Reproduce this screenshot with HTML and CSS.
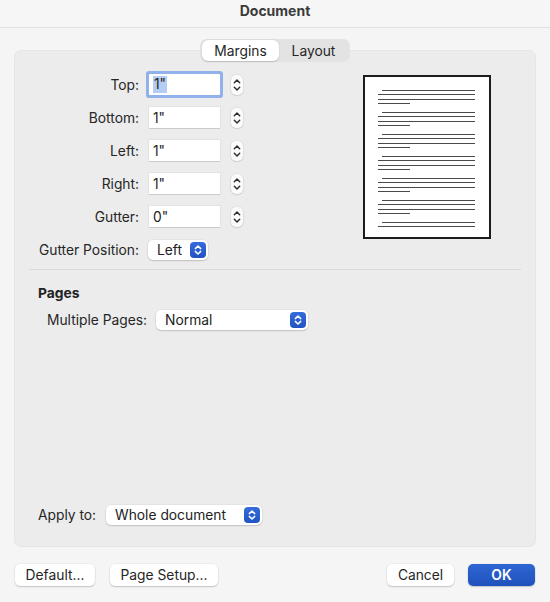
FILE: index.html
```html
<!DOCTYPE html>
<html>
<head>
<meta charset="utf-8">
<title>Document</title>
<link rel="stylesheet" href="styles.css">
</head>
<body>
<header class="titlebar">Document</header>
<main class="content">
  <div class="tabs">
    <span class="tab active">Margins</span>
    <span class="tab">Layout</span>
  </div>
  <section class="box">
    <div class="upper">
      <div class="form">
        <div class="row">
          <span class="lbl">Top:</span>
          <span class="field focused"><span class="sel">1"</span></span>
          <span class="stepper"><svg width="12" height="20" viewBox="0 0 12 20"><path d="M3.3 7.8 L6 5 L8.7 7.8 M3.3 12.2 L6 15 L8.7 12.2" fill="none" stroke="#2a2a2a" stroke-width="1.4" stroke-linecap="round" stroke-linejoin="round"/></svg></span>
        </div>
        <div class="row">
          <span class="lbl">Bottom:</span>
          <span class="field">1"</span>
          <span class="stepper"><svg width="12" height="20" viewBox="0 0 12 20"><path d="M3.3 7.8 L6 5 L8.7 7.8 M3.3 12.2 L6 15 L8.7 12.2" fill="none" stroke="#2a2a2a" stroke-width="1.4" stroke-linecap="round" stroke-linejoin="round"/></svg></span>
        </div>
        <div class="row">
          <span class="lbl">Left:</span>
          <span class="field">1"</span>
          <span class="stepper"><svg width="12" height="20" viewBox="0 0 12 20"><path d="M3.3 7.8 L6 5 L8.7 7.8 M3.3 12.2 L6 15 L8.7 12.2" fill="none" stroke="#2a2a2a" stroke-width="1.4" stroke-linecap="round" stroke-linejoin="round"/></svg></span>
        </div>
        <div class="row">
          <span class="lbl">Right:</span>
          <span class="field">1"</span>
          <span class="stepper"><svg width="12" height="20" viewBox="0 0 12 20"><path d="M3.3 7.8 L6 5 L8.7 7.8 M3.3 12.2 L6 15 L8.7 12.2" fill="none" stroke="#2a2a2a" stroke-width="1.4" stroke-linecap="round" stroke-linejoin="round"/></svg></span>
        </div>
        <div class="row">
          <span class="lbl">Gutter:</span>
          <span class="field">0"</span>
          <span class="stepper"><svg width="12" height="20" viewBox="0 0 12 20"><path d="M3.3 7.8 L6 5 L8.7 7.8 M3.3 12.2 L6 15 L8.7 12.2" fill="none" stroke="#2a2a2a" stroke-width="1.4" stroke-linecap="round" stroke-linejoin="round"/></svg></span>
        </div>
        <div class="row">
          <span class="lbl">Gutter Position:</span>
          <span class="popup popup-gutter"><span class="ptext">Left</span><span class="pbtn"><svg width="16" height="16" viewBox="0 0 16 16"><path d="M5.3 6.6 L8 4 L10.7 6.6 M5.3 9.4 L8 12 L10.7 9.4" fill="none" stroke="#fff" stroke-width="1.5" stroke-linecap="round" stroke-linejoin="round"/></svg></span></span>
        </div>
      </div>
      <div class="preview">
        <div class="grp"><i class="ln ind"></i><i class="ln"></i><i class="ln"></i><i class="ln short"></i></div>
        <div class="grp"><i class="ln ind"></i><i class="ln"></i><i class="ln"></i><i class="ln short"></i></div>
        <div class="grp"><i class="ln ind"></i><i class="ln"></i><i class="ln"></i><i class="ln short"></i></div>
        <div class="grp"><i class="ln ind"></i><i class="ln"></i><i class="ln"></i><i class="ln short"></i></div>
        <div class="grp"><i class="ln ind"></i><i class="ln"></i><i class="ln"></i><i class="ln short"></i></div>
        <div class="grp"><i class="ln ind"></i><i class="ln"></i><i class="ln"></i><i class="ln short"></i></div>
        <div class="grp"><i class="ln ind"></i><i class="ln"></i></div>
      </div>
    </div>
    <hr class="sep">
    <div class="pages">
      <div class="pages-title">Pages</div>
      <div class="mp-row">
        <span class="mp-lbl">Multiple Pages:</span>
        <span class="popup popup-mp"><span class="ptext">Normal</span><span class="pbtn"><svg width="16" height="16" viewBox="0 0 16 16"><path d="M5.3 6.6 L8 4 L10.7 6.6 M5.3 9.4 L8 12 L10.7 9.4" fill="none" stroke="#fff" stroke-width="1.5" stroke-linecap="round" stroke-linejoin="round"/></svg></span></span>
      </div>
    </div>
    <div class="apply-row">
      <span class="apply-lbl">Apply to:</span>
      <span class="popup popup-apply"><span class="ptext">Whole document</span><span class="pbtn"><svg width="16" height="16" viewBox="0 0 16 16"><path d="M5.3 6.6 L8 4 L10.7 6.6 M5.3 9.4 L8 12 L10.7 9.4" fill="none" stroke="#fff" stroke-width="1.5" stroke-linecap="round" stroke-linejoin="round"/></svg></span></span>
    </div>
  </section>
  <footer class="buttons">
    <div class="btn-group">
      <button class="btn btn-default">Default...</button>
      <button class="btn btn-setup">Page Setup...</button>
    </div>
    <div class="btn-group right">
      <button class="btn btn-cancel">Cancel</button>
      <button class="btn btn-ok">OK</button>
    </div>
  </footer>
</main>
</body>
</html>
```

FILE: styles.css
```css
* { box-sizing: border-box; }

body {
  margin: 0;
  width: 550px;
  height: 602px;
  overflow: hidden;
  background: #f5f5f5;
  font-family: Inter, "Noto Sans", "Liberation Sans", sans-serif;
  font-size: 13.8px;
  color: #262626;
}

.titlebar {
  height: 28px;
  line-height: 22px;
  text-align: center;
  font-weight: 700;
  font-size: 14px;
  color: #3a3a3a;
  border-bottom: 1px solid #e2e2e2;
  background: #f6f6f6;
}

.content {
  display: flex;
  flex-direction: column;
}

.tabs {
  position: relative;
  z-index: 1;
  align-self: center;
  margin-top: 11px;
  height: 23px;
  width: 150px;
  display: flex;
  padding: 1px 2px;
  background: #e3e3e3;
  border-radius: 7px;
}

.tab {
  flex: 0 0 auto;
  display: flex;
  align-items: center;
  justify-content: center;
  border-radius: 6px;
  color: #262626;
}

.tab.active {
  width: 77px;
  background: #fff;
  box-shadow: 0 0.5px 1.5px rgba(0,0,0,0.18);
}

.tab:not(.active) {
  width: 69px;
}

.box {
  margin: -12px 0 0 14px;
  width: 522px;
  height: 497px;
  background: #ececec;
  border-radius: 7px;
  border: 1px solid #e6e6e6;
  padding-top: 23px;
  display: flex;
  flex-direction: column;
}

.upper {
  display: flex;
  justify-content: space-between;
  align-items: flex-start;
  padding-right: 44px;
}

.form {
  display: flex;
  flex-direction: column;
  gap: 12px;
}

.row {
  display: flex;
  align-items: center;
  height: 21px;
}

.lbl {
  width: 124px;
  text-align: right;
  margin-right: 10px;
}

.field {
  width: 71px;
  height: 21px;
  background: #fff;
  display: flex;
  align-items: center;
  padding-left: 4px;
  box-shadow: 0 0 0 0.5px rgba(0,0,0,0.08), 0 1px 0.5px rgba(0,0,0,0.10);
  color: #222;
}

.field.focused {
  box-shadow: 0 0 0 3px #90b1ea;
  border-radius: 1px;
}

.sel {
  background: #b6cdf3;
  padding: 1px 1px;
  line-height: 15px;
}

.stepper {
  margin-left: 11px;
  width: 12px;
  height: 20px;
  background: #fbfbfb;
  border-radius: 5px;
  box-shadow: 0 0 0 0.5px rgba(0,0,0,0.05), 0 0.5px 1.5px rgba(0,0,0,0.18);
  display: flex;
}

.popup {
  height: 20px;
  background: #fff;
  border-radius: 5px;
  box-shadow: 0 0 0 0.5px rgba(0,0,0,0.06), 0 1px 1.5px rgba(0,0,0,0.16);
  display: flex;
  align-items: center;
  justify-content: space-between;
  padding: 0 2px 0 9px;
  color: #222;
}

.pbtn {
  width: 16px;
  height: 16px;
  border-radius: 4px;
  background: linear-gradient(#356ddb, #2153c1);
  display: flex;
}

.popup-gutter { width: 60px; margin-left: -1px; }
.popup-mp { width: 152px; }
.popup-apply { width: 156px; }

.preview {
  margin-top: 1px;
  width: 128px;
  height: 164px;
  background: #fff;
  border: 2px solid #1c1c1c;
  padding: 13px 0 0 13px;
  display: flex;
  flex-direction: column;
  gap: 7.8px;
}

.grp {
  display: flex;
  flex-direction: column;
  gap: 3.4px;
}

.ln {
  display: block;
  height: 1px;
  width: 97px;
  background: #4a4a4a;
}

.ln.ind {
  margin-left: 4px;
  width: 93px;
}

.ln.short {
  width: 32px;
}

.sep {
  margin: 9px 14px 0 14px;
  border: 0;
  height: 1px;
  background: #d9d9d9;
}

.pages {
  padding-left: 23px;
}

.pages-title {
  margin-top: 15px;
  font-weight: 700;
  line-height: 16px;
  color: #222;
}

.mp-row {
  margin-top: 9px;
  display: flex;
  align-items: center;
  padding-left: 9px;
}

.mp-lbl {
  margin-right: 9px;
}

.apply-row {
  margin-top: auto;
  margin-bottom: 20px;
  padding-left: 23px;
  display: flex;
  align-items: center;
  height: 22px;
}

.apply-lbl {
  margin-right: 10px;
}

.buttons {
  margin-top: 17px;
  padding: 0 15px;
  display: flex;
  justify-content: space-between;
}

.btn-group {
  display: flex;
  gap: 15px;
}

.btn-group.right {
  gap: 14px;
}

.btn {
  height: 22px;
  border: 0;
  border-radius: 5px;
  background: #fff;
  box-shadow: 0 0 0 0.5px rgba(0,0,0,0.06), 0 1px 1.5px rgba(0,0,0,0.18);
  font-family: inherit;
  font-size: 13.8px;
  color: #262626;
  padding: 0;
}

.btn-default { width: 80px; }
.btn-setup { width: 108px; }
.btn-cancel { width: 67px; }
.btn-ok {
  width: 67px;
  color: #fff;
  font-weight: 600;
  background: linear-gradient(#2f66d3, #1f51bb);
}
```
